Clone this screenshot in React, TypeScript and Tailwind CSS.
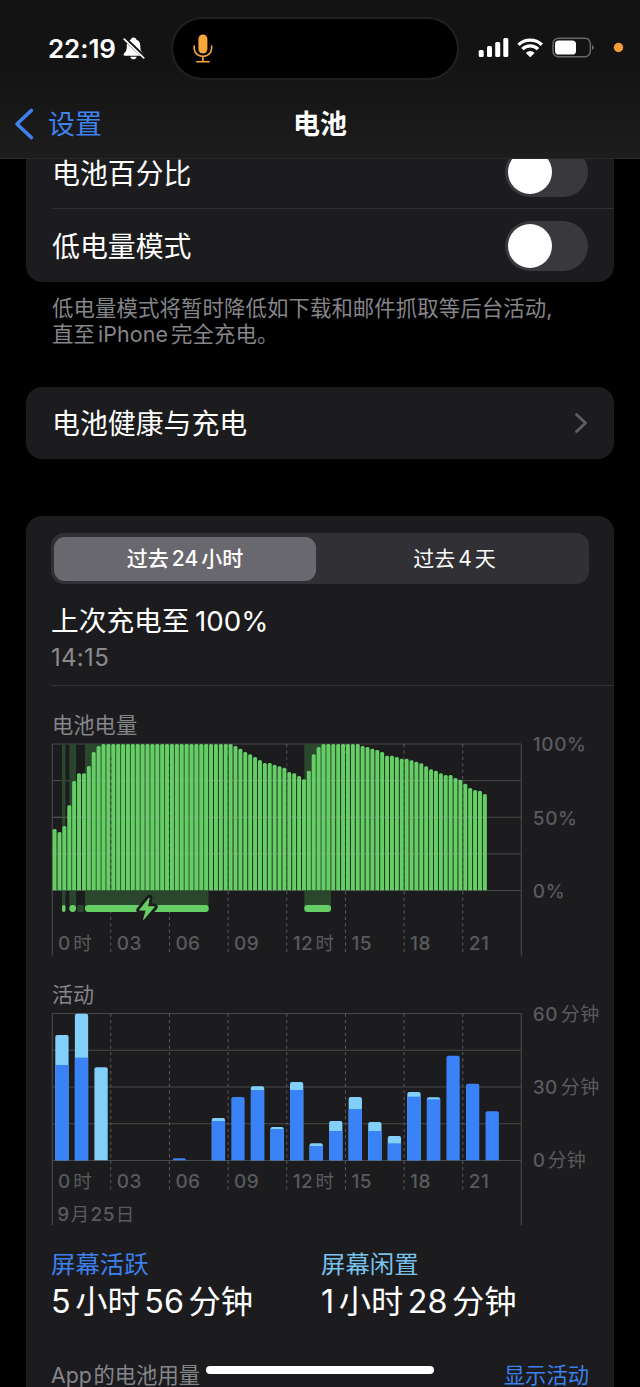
import React from "react";

const GRAY = "#5a5a5e";
const GRID = "#48484a";
const GREEN = "#65cf66";
const BAND = "#2a462d";
const BLUE = "#3a82f7";
const CYAN = "#82cffa";

const PITCH = 58.67;
const LEFT = 52.3;
const RIGHT = 521.3;
const BOLT = "M149.2 898L139.6 910.1H146.2L143.6 919.4L154.4 906.8H147.6Z";

/** Top edge of each quarter-hour battery bar, in thirds of a pixel below y = 730. */
const batteryTops: number[] = [
  297, 306, 288, 226, 153, 130, 130, 108, 66, 48,
  ...Array(27).fill(42),
  48, 56, 66, 73, 81, 90, 99, 99, 104, 109, 113, 126, 130, 138, 148, 122, 73, 51,
  ...Array(8).fill(42),
  48, 51, 56, 60, 66, 77, 77, 81, 86, 86, 91, 95, 100, 109, 118, 122, 130, 135,
  135, 144, 149, 161, 174, 180, 182, 192,
];

/** Hour, top of the whole bar and top of its active part, in thirds of a pixel below y = 980. */
const activity: [number, number, number][] = [
  [0, 165, 255], [1, 101, 233], [2, 262, 541], [6, 535, 535], [8, 414, 423],
  [9, 351, 351], [10, 319, 330], [11, 441, 447], [12, 306, 330], [13, 490, 498],
  [14, 423, 453], [15, 351, 387], [16, 426, 453], [17, 468, 490], [18, 336, 350],
  [19, 352, 358], [20, 227, 227], [21, 311, 311], [22, 394, 394],
];

/** Puts a narrow gap between runs of Chinese and Latin characters. */
function Mixed({ text, gap = "mr-[0.14em]" }: { text: string; gap?: string }) {
  const runs = text.match(/[\x21-\x7e]+|[^\x21-\x7e]+/g) ?? [];
  return (
    <>
      {runs.map((r, i) => (
        <span key={i} className={i < runs.length - 1 ? gap : ""}>{r}</span>
      ))}
    </>
  );
}

function Toggle() {
  return (
    <div className="flex h-[50px] w-[83px] items-center rounded-full bg-[#39393d] pl-[3px]">
      <div className="size-[44px] rounded-full bg-white" />
    </div>
  );
}

function HourLabels({ y }: { y: number }) {
  const labels = ["0", "03", "06", "09", "12", "15", "18", "21"];
  return (
    <g fill={GRAY} fontSize="19" fontWeight="500" letterSpacing="0.4">
      {labels.map((l, i) => (
        <text key={l} x={LEFT + i * PITCH + 5.8} y={y}>
          {l}
          {i % 4 === 0 && <tspan dx="2.4" fontSize="18.5" fontWeight="400">时</tspan>}
        </text>
      ))}
    </g>
  );
}

function Grid({ top, bottom, dashEnd, sideEnd }: { top: number; bottom: number; dashEnd: number; sideEnd: number }) {
  return (
    <g stroke={GRID} strokeWidth="1" fill="none">
      {[0, 1, 2, 3, 4].map((i) => {
        const y = top + ((bottom - top) * i) / 4;
        return <path key={i} d={`M${LEFT} ${y}H${RIGHT}`} />;
      })}
      <path d={`M${LEFT} ${top}V${sideEnd}M${RIGHT} ${top}V${sideEnd}`} strokeWidth="1.2" />
      {[1, 2, 3, 4, 5, 6, 7].map((i) => (
        <path key={i} stroke="#5c5c5e" strokeDasharray="3.2 3.2" d={`M${LEFT + i * PITCH - 0.2} ${top}V${dashEnd}`} />
      ))}
    </g>
  );
}

function BatteryChart() {
  const base = 890.3;
  return (
    <svg className="block overflow-visible" width="588" height="222" viewBox="26 738 588 222">
      <Grid top={744} bottom={890.5} dashEnd={952} sideEnd={955.5} />
      <g fill={BAND}>
        <rect x="62" y="744" width="3.5" height="165" />
        <rect x="69.3" y="744" width="6.8" height="165" />
        <rect x="77.5" y="905" width="6.2" height="7" rx="1" />
        <path d="M85 744H208.5V909H85Z" />
        <path d="M304.3 744H331V909H304.3Z" />
      </g>
      <g fill={GREEN}>
        <rect x="62" y="905" width="3.5" height="7" rx="1.7" />
        <rect x="69.3" y="905" width="6.8" height="7" rx="3.4" />
        <rect x="85" y="905" width="123.7" height="7" rx="3" />
        <rect x="304.3" y="905" width="26.7" height="7" rx="3" />
        {batteryTops.map((t, i) => {
          const x = 52.6 + i * (PITCH / 12);
          const y = 730 + t / 3;
          return <path key={i} d={`M${x} ${base}V${y + 1.5}q0-1.5 1.5-1.5h1q1.5 0 1.5 1.5V${base}Z`} />;
        })}
      </g>
      <g stroke="#1c1c1e" fill="none" opacity="0.5">
        {[1, 2, 3, 4, 5, 6, 7].map((i) => (
          <path key={i} strokeDasharray="3.2 3.2" d={`M${LEFT + i * PITCH - 0.2} ${i === 7 ? 782 : 757}V890`} />
        ))}
      </g>
      <path d="M52.6 817.3H486M52.6 853.9H486M80 780.6H461" stroke="#b0b0b0" opacity="0.2" />
      <path d={BOLT} fill="#1c1c1e" stroke="#1c1c1e" strokeWidth="6.5" strokeLinejoin="round" />
      <path d={BOLT} fill={GREEN} stroke={GREEN} strokeWidth="1" strokeLinejoin="round" />
      <HourLabels y={950.3} />
      <g fill={GRAY} fontSize="19" fontWeight="500" letterSpacing="0.6">
        <text x="532.8" y="751.3">100%</text>
        <text x="532.8" y="824.6">50%</text>
        <text x="532.8" y="897.8">0%</text>
      </g>
    </svg>
  );
}

function ActivityChart() {
  const base = 1160.3;
  return (
    <svg className="block overflow-visible" width="588" height="222" viewBox="26 1006 588 222">
      <Grid top={1013.5} bottom={1160.5} dashEnd={1190} sideEnd={1225} />
      {activity.map(([h, t, s]) => {
        const x = 55.3 + h * (PITCH / 3);
        const top = 980 + t / 3;
        const split = 980 + s / 3;
        const r = Math.min(2, base - top);
        return (
          <g key={h}>
            <path fill={split > top ? CYAN : BLUE} d={`M${x} ${base}V${top + r}q0-${r} 2-${r}h9.3q2 0 2 ${r}V${base}Z`} />
            {split > top && split < base && <rect x={x} y={split} width="13.3" height={base - split} fill={BLUE} />}
          </g>
        );
      })}
      <HourLabels y={1187.5} />
      <g fill={GRAY} fontSize="19" fontWeight="500" letterSpacing="0.4">
        <text x="57.3" y="1220.5">9<tspan dx="1" fontSize="18.5" fontWeight="400">月</tspan><tspan dx="1">25</tspan><tspan dx="1" fontSize="18.5" fontWeight="400">日</tspan></text>
        <text x="532.8" y="1020.5">60<tspan dx="3" fontWeight="400">分钟</tspan></text>
        <text x="532.8" y="1093.8">30<tspan dx="3" fontWeight="400">分钟</tspan></text>
        <text x="532.8" y="1167.3">0<tspan dx="2" fontWeight="400">分钟</tspan></text>
      </g>
    </svg>
  );
}

function BellOff() {
  return (
    <svg width="22" height="23" viewBox="0 0 22 23">
      <path fill="#fff" d="M10.5 0.6c-1.700 0-2.500 1-2.800 2.100C4.600 3.700 3.800 6.500 3.800 9c0 4-.6 5.200-2.700 7.400-.9 1-.5 2.300.7 2.300h17.600c1.200 0 1.600-1.300.7-2.300-2.100-2.200-2.800-3.400-2.800-7.400 0-2.500-.8-5.300-3.900-6.300C13.100 1.600 12.200.6 10.500.6ZM7.300 19.700h6.400c-.3 1.500-1.500 2.600-3.200 2.600s-2.900-1.100-3.200-2.600Z" />
      <path d="M1.600 1.300L21.600 20.500" stroke="#131314" strokeWidth="3.800" />
      <path d="M1.200 2.200L20.700 20.900" stroke="#fff" strokeWidth="1.700" strokeLinecap="round" />
    </svg>
  );
}

function Mic() {
  return (
    <svg width="20" height="30" viewBox="0 0 20 30" fill="none" stroke="#f7a63b" strokeWidth="1.600" strokeLinecap="round">
      <rect x="5.400" y="0.500" width="9" height="19" rx="4.500" fill="#f7a63b" stroke="none" />
      <path d="M1.200 12v2.200c0 5 3.800 8.200 8.700 8.200s8.700-3.200 8.700-8.200V12M9.900 22.500v5M3.700 27.800h12.400" />
    </svg>
  );
}

function StatusIcons() {
  return (
    <svg width="150" height="24" viewBox="476 36 150 24">
      <g fill="#fff">
        <rect x="478.700" y="50" width="5" height="7" rx="1.500" />
        <rect x="487" y="46" width="5" height="11" rx="1.500" />
        <rect x="495.200" y="42" width="5" height="15" rx="1.500" />
        <rect x="503.300" y="38" width="5" height="19" rx="1.500" />
        <path d="M530.200 57.300L525.800 52.900A6.300 6.300 0 0 1 534.600 52.900Z" />
      </g>
      <g fill="none" stroke="#fff" strokeWidth="3.300">
        <path d="M518.500 44.700A17 17 0 0 1 541.900 44.700" />
        <path d="M522.400 49.100A11 11 0 0 1 538 49.100" />
      </g>
      <rect x="553" y="38.200" width="37.300" height="18.600" rx="5.500" fill="none" stroke="#68686a" strokeWidth="1.500" />
      <rect x="555" y="40.400" width="21" height="14.200" rx="3.700" fill="#fff" />
      <path d="M592 45q2 .8 2 2.500t-2 2.500Z" fill="#68686a" />
      <circle cx="618.500" cy="47.500" r="4.700" fill="#f29d38" />
    </svg>
  );
}

export default function App() {
  return (
    <div className="relative flex h-[1387px] w-[640px] flex-col overflow-hidden bg-black font-['Inter','Noto_Sans_CJK_SC',sans-serif] font-[380] text-white">
      <header className="relative z-10 flex h-[159px] shrink-0 flex-col border-b border-[#29292a] bg-linear-to-b from-[#131314] from-40% to-[#1d1d1e]">
        <div className="flex h-[97px] items-center">
          <div className="flex w-[171px] items-center gap-[7px] pl-[48px]">
            <span className="text-[26px] leading-none font-semibold tracking-[-0.1px]">22:19</span>
            <BellOff />
          </div>
          <div className="flex h-[63px] w-[288px] items-center rounded-full border-2 border-[#202021] bg-black pl-[20px]">
            <Mic />
          </div>
          <div className="ml-[17px] flex -translate-y-px">
            <StatusIcons />
          </div>
        </div>
        <div className="grid h-[55px] grid-cols-3 items-center text-[27px] leading-none">
          <div className="flex items-center gap-[13px] pl-[14px] text-[#3f82ee]">
            <svg className="-mt-[2px]" width="21" height="32" viewBox="0 0 21 32" fill="none" stroke="currentColor" strokeWidth="3.600" strokeLinecap="round" strokeLinejoin="round">
              <path d="M17.300 2.500L3 16L17.300 29.500" />
            </svg>
            <span>设置</span>
          </div>
          <span className="text-center font-semibold">电池</span>
        </div>
      </header>

      <main className="flex min-h-0 flex-1 flex-col px-[26px]">
        <section className="-mt-[23px] shrink-0 rounded-[16px] bg-[#1c1c1e] pl-[26px] text-[27.9px]">
          <div className="flex h-[73px] items-center justify-between border-b border-[#2f2f31] pr-[26px]">
            <span className="pt-[5px]">电池百分比</span>
            <Toggle />
          </div>
          <div className="flex h-[73px] items-center justify-between pr-[26px]">
            <span className="pt-[5px]">低电量模式</span>
            <Toggle />
          </div>
        </section>
        <p className="h-[105px] shrink-0 pt-[13px] pl-[26px] text-[21.4px] leading-[26px] tracking-[0.1px] whitespace-nowrap text-[#85858a]">
          低电量模式将暂时降低如下载和邮件抓取等后台活动,<br />
          <Mixed text="直至iPhone完全充电。" />
        </p>

        <section className="flex h-[72px] shrink-0 items-center justify-between rounded-[16px] bg-[#1c1c1e] pr-[26px] pl-[26px] text-[27.9px]">
          <span className="pt-[3px]">电池健康与充电</span>
          <svg width="14" height="22" viewBox="0 0 14 22" fill="none" stroke="#5f5f63" strokeWidth="2.800" strokeLinecap="round" strokeLinejoin="round">
            <path d="M2.500 2.500L11.500 11L2.500 19.500" />
          </svg>
        </section>

        <section className="mt-[57px] flex h-[900px] shrink-0 flex-col rounded-t-[16px] bg-[#1c1c1e]">
          <div className="mx-[25px] mt-[17px] flex h-[51px] shrink-0 items-center rounded-[13px] bg-[#313135] p-[3px] text-[21px] font-medium">
            <div className="flex h-[44px] w-[262px] items-center justify-center rounded-[11px] bg-[#69686e]">
              <Mixed text="过去24小时" />
            </div>
            <div className="flex flex-1 items-center justify-center pl-[7px] font-[390]">
              <Mixed text="过去4天" />
            </div>
          </div>
          <div className="ml-[25px] flex h-[102px] shrink-0 flex-col border-b border-[#323234] pt-[18px]">
            <div className="text-[27.7px] leading-[38px]"><Mixed text="上次充电至100%" gap="mr-[0.2em]" /></div>
            <div className="text-[24px] leading-[36px] tracking-[0.3px] text-[#8a8a8f]">14:15</div>
          </div>
          <div className="h-[52px] shrink-0 pt-[25px] pl-[26px] text-[21.3px] leading-[28px] text-[#85858a]">电池电量</div>
          <BatteryChart />
          <div className="h-[46px] shrink-0 pt-[21px] pl-[26px] text-[21px] leading-[28px] text-[#85858a]">活动</div>
          <ActivityChart />
          <div className="flex pt-[19px] pl-[25px]">
            <div className="w-[270px]">
              <div className="text-[24.400px] leading-[34px] text-[#3c80ee]">屏幕活跃</div>
              <div className="text-[32.3px] leading-[42px]"><Mixed text="5小时56分钟" /></div>
            </div>
            <div>
              <div className="text-[24.400px] leading-[34px] text-[#78c3ec]">屏幕闲置</div>
              <div className="text-[32.3px] leading-[42px]"><Mixed text="1小时28分钟" /></div>
            </div>
          </div>
          <div className="mt-[37px] flex justify-between px-[25px] text-[21.3px] leading-[30px]">
            <span className="text-[#85858a]"><Mixed text="App的电池用量" gap="mr-[0.08em]" /></span>
            <span className="text-[#3c80ee]">显示活动</span>
          </div>
        </section>
      </main>
      <div className="absolute top-[1366px] left-[206px] h-[8px] w-[228px] rounded-full bg-white" />
    </div>
  );
}
